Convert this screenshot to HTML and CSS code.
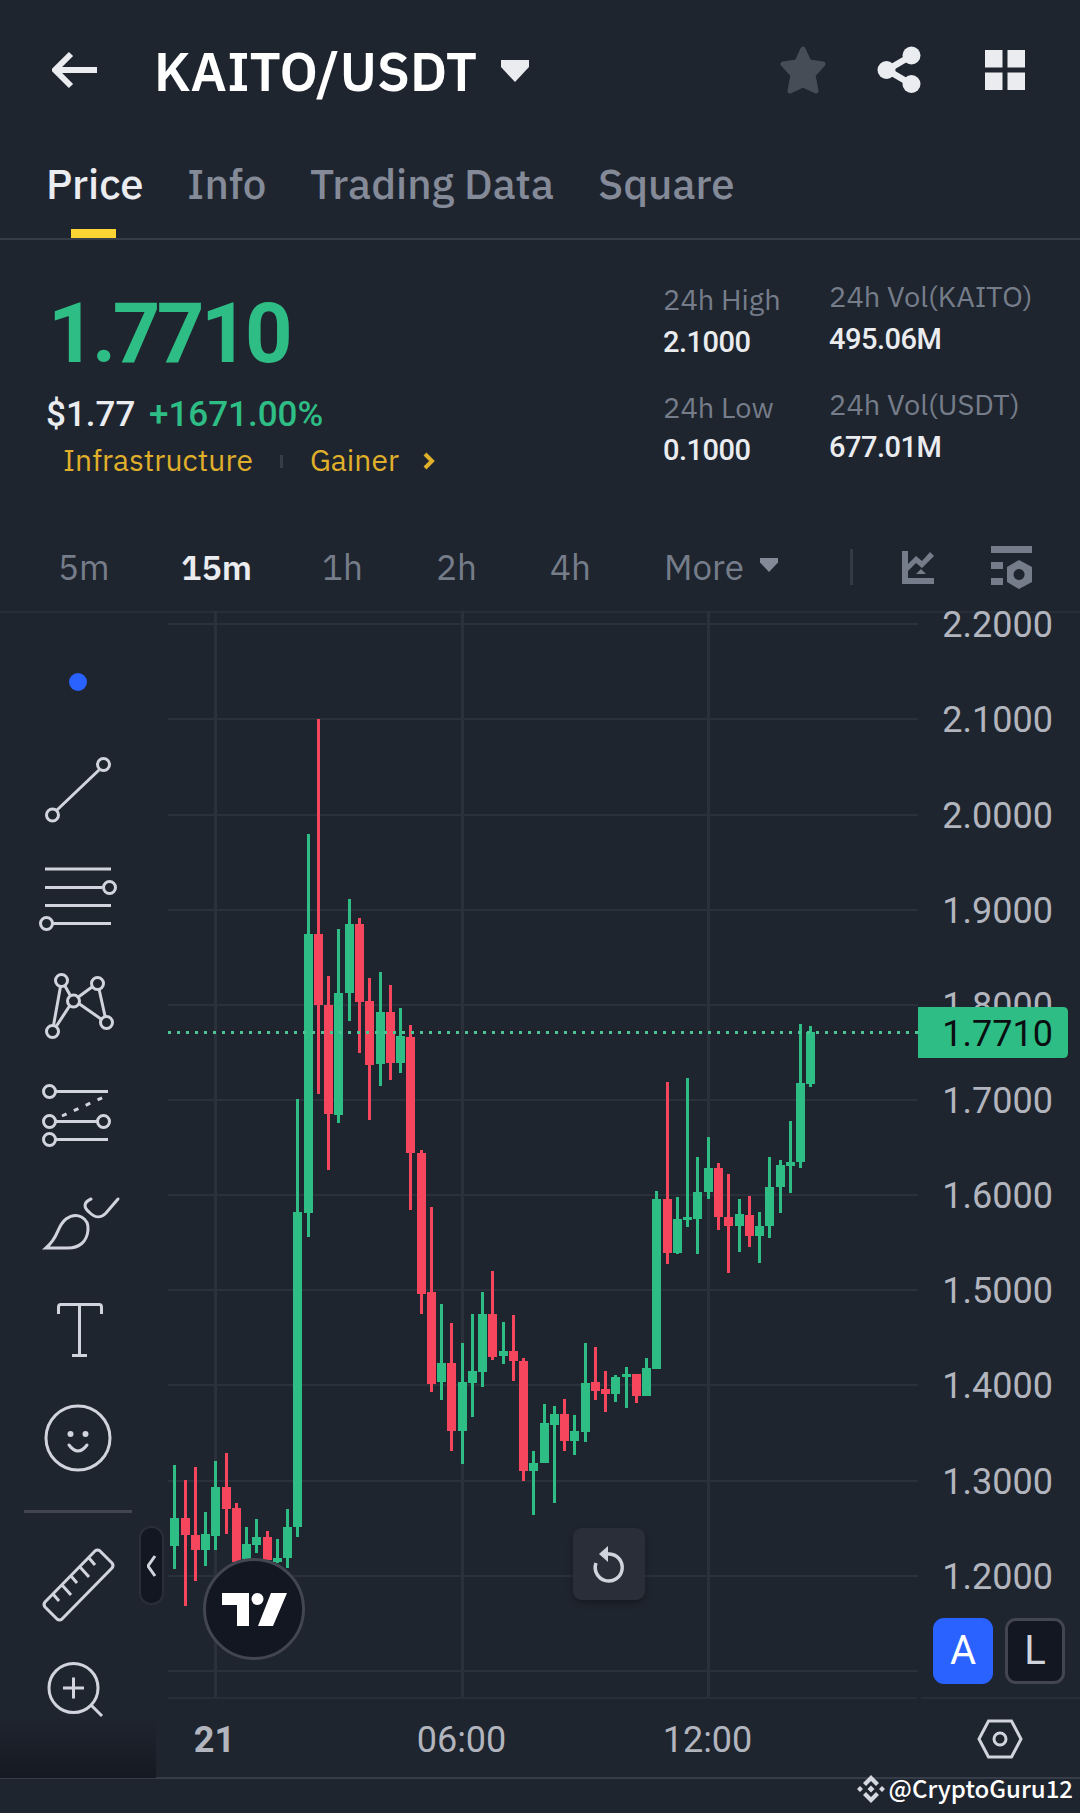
FILE: index.html
```html
<!DOCTYPE html>
<html lang="en">
<head>
    <meta charset="UTF-8">
    <meta name="viewport" content="width=device-width, initial-scale=1.0">
    <title>KAITO/USDT</title>
    <link rel="stylesheet" href="styles.css">
</head>
<body>

    <!-- Header -->
    <header class="header">
        <svg class="back" width="46" height="38" viewBox="0 0 46 38"><path d="M19 3L3 19l16 16M3 19h42" fill="none" stroke="#eaecef" stroke-width="6"/></svg>
        <h1>KAITO/USDT</h1>
        <svg class="caret" width="28" height="22" viewBox="0 0 28 22"><path d="M0 0h28v7L14 22 0 7z" fill="#eaecef"/></svg>
        <div class="actions">
            <svg width="46" height="48" viewBox="0 0 46 48"><path d="M23 3l6 13 14 2-10 11 3 16-13-6-13 6 3-16L3 18l14-2z" fill="#474d57" stroke="#474d57" stroke-width="5" stroke-linejoin="round"/></svg>
            <svg width="44" height="48" viewBox="0 0 44 48"><path d="M34 10L10 24l24 14" fill="none" stroke="#eaecef" stroke-width="6.5"/><g fill="#eaecef"><circle cx="34.500" cy="9.500" r="9"/><circle cx="9.500" cy="24" r="9"/><circle cx="34.500" cy="38" r="9"/></g></svg>
            <svg width="40" height="40" viewBox="0 0 40 40"><path d="M0 0h17.500v17.500H0zM22.500 0H40v17.500H22.500zM0 22.500h17.500V40H0zM22.500 22.500H40V40H22.500z" fill="#eaecef"/></svg>
        </div>
    </header>

    <!-- Tabs -->
    <nav class="tabs">
        <a class="active">Price</a>
        <a class="info">Info</a>
        <a class="trading">Trading Data</a>
        <a class="square">Square</a>
    </nav>

    <!-- Price summary -->
    <section class="summary">
        <div class="price-box">
            <div class="price">1.7710</div>
            <div class="change"><span class="usd">$1.77</span><span class="percent">+1671.00%</span></div>
            <div class="tags">
                <span class="infra">Infrastructure</span>
                <i></i>
                <span class="gainer">Gainer</span>
                <svg width="12" height="18" viewBox="0 0 12 18"><path d="M2 2l7 7-7 7" fill="none" stroke="#e0b02a" stroke-width="4"/></svg>
            </div>
        </div>
        <div class="stats">
            <dl><dt class="high">24h High</dt><dd>2.1000</dd></dl>
            <dl><dt class="low">24h Low</dt><dd>0.1000</dd></dl>
        </div>
        <div class="stats volume">
            <dl><dt>24h Vol(KAITO)</dt><dd>495.06M</dd></dl>
            <dl><dt>24h Vol(USDT)</dt><dd>677.01M</dd></dl>
        </div>
    </section>

    <!-- Intervals -->
    <nav class="intervals">
        <span>5m</span>
        <span class="active">15m</span>
        <span>1h</span>
        <span>2h</span>
        <span>4h</span>
        <span class="more">More <svg width="18" height="14" viewBox="0 0 18 14"><path d="M0 0h18v4.500L9 14 0 4.500z" fill="#848a97"/></svg></span>
        <i></i>
        <svg class="chart-icon" width="32" height="33" viewBox="0 0 32 33"><path d="M0 0h6v27h26v6H0zM6 13l8-8 6 5L28 1l4 4-12 12-6-5-8 8zM19 18l5 5H14z" fill="#767d8a"/></svg>
        <svg class="settings-icon" width="41" height="43" viewBox="0 0 41 43"><path d="M0 0h41v7H0zM0 16h12v7H0zM0 32h12v7H0z" fill="#767d8a"/><path d="M28 14l13 7v15l-13 7-12-7V21zM28 23a5.500 5.500 0 1 0 .1 0z" fill="#767d8a" fill-rule="evenodd"/></svg>
    </nav>

    <!-- Chart -->
    <main class="chart-area">
        <div class="toolbar">
            <svg viewBox="-78 -54 156 108"><circle r="9" fill="#2962ff" stroke="none"/></svg>
            <svg viewBox="-78 -54 156 108"><path d="M-21 20L21-20"/><circle cx="-25.500" cy="25" r="6"/><circle cx="25.500" cy="-25.500" r="6"/></svg>
            <svg viewBox="-78 -54 156 108"><path d="M-33-29h66M-33-10.500h57M-33 7.500h66M-25 25.500h58"/><circle cx="31.500" cy="-10.500" r="6"/><circle cx="-31.500" cy="25.500" r="6"/></svg>
            <svg viewBox="-78 -54 156 108"><path d="M-17.500-19.500l-7 39M-13-20l5 9M-1-8l15-11M21-17l6 27M1.500-2L23 13M-8.500 0l-13 20"/><circle cx="-16.500" cy="-25.500" r="6"/><circle cx="19.500" cy="-22.500" r="6"/><circle cx="-4.500" cy="-5" r="6"/><circle cx="-25.500" cy="25.500" r="6"/><circle cx="28.500" cy="16.500" r="6"/></svg>
            <svg viewBox="-78 -54 156 108"><path d="M-22-22.500h52M-22 7.500h42M-22 25.500h52"/><path d="M-16 2L26-17" stroke-dasharray="5 8"/><circle cx="-28.500" cy="-22.500" r="6"/><circle cx="-28.500" cy="7.500" r="6"/><circle cx="25.500" cy="7.500" r="6"/><circle cx="-28.500" cy="25.500" r="6"/></svg>
            <svg viewBox="-78 -54 156 108"><path d="M-32 26C-18 14-22 5-12-3C-1-11 11-4 10 8C9 20 1 26-10 26zM13-23c-7 3-8 8-2 13c6 6 11 7 17 1L40-23" stroke-linecap="round"/></svg>
            <svg viewBox="-78 -54 156 108"><path d="M-19.500-16v-7q0-2.500 2.500-2.500h38q2.500 0 2.500 2.500v7M1.500-25v50M-6 25.500H9"/></svg>
            <svg viewBox="-78 -54 156 108"><circle r="32"/><circle cx="-7.500" cy="-4" r="3" class="eye"/><circle cx="7.500" cy="-4" r="3" class="eye"/><path d="M-9 7q9 12 18 0" stroke-linecap="round"/></svg>
            <hr>
            <svg viewBox="-78 -54 156 108"><path d="M17-34q2.500-2 5 0l12 12q2 2.500 0 5L-16 34q-2.500 2-5 0l-12-12q-2-2.500 0-5zM-25 9l6 7M-16 0l9 10M-7-9l6 7M2-18l9 10M11-27l6 7" stroke-linejoin="round"/></svg>
            <svg viewBox="-78 -54 156 108"><circle cx="-4.500" cy="-5" r="24.500"/><path d="M-15-5H6M-4.500-15.500v21M13 12l11 11"/></svg>
            <div class="fade"></div>
        </div>
        <svg id="chart" width="924" height="1168" viewBox="156 611 924 1168"></svg>

        <div class="collapse"><svg width="10" height="22" viewBox="0 0 10 22"><path d="M8 1L1 11l7 10" fill="none" stroke="#d1d4dc" stroke-width="3"/></svg></div>
        <div class="tv-logo"><svg width="66" height="34" viewBox="0 0 66 34"><path d="M1 1h27v33H16V13H1zM50 1h16L52 34H37z" fill="#fff"/><circle cx="36.500" cy="7" r="6" fill="#fff"/></svg></div>
        <div class="reset"><svg width="36" height="40" viewBox="0 0 36 40"><path d="M5 19a13.500 13.500 0 1 0 13.500-9H10" fill="none" stroke="#d1d4dc" stroke-width="3.500"/><path d="M17 2v16L8 10z" fill="#d1d4dc"/></svg></div>
        <div class="scale-buttons"><button class="auto">A</button><button>L</button></div>
        <svg class="axis-settings" width="46" height="40" viewBox="0 0 46 40"><path d="M11.500 2h23L44 20l-9.500 18h-23L2 20z" fill="none" stroke="#d1d4dc" stroke-width="3"/><circle cx="23" cy="20" r="6" fill="none" stroke="#d1d4dc" stroke-width="3"/></svg>
    </main>

    <footer>
        <svg width="28" height="28" viewBox="0 0 28 28"><path d="M14 0l8 8-3 3-5-5-5 5-3-3zM14 28l8-8-3-3-5 5-5-5-3 3zM14 10.500l3.500 3.500-3.500 3.500-3.500-3.500zM3 11l3 3-3 3-3-3zM25 11l3 3-3 3-3-3z" fill="#d5d8de"/></svg>
        <span>@CryptoGuru12</span>
    </footer>

    <script src="chart.js"></script>
</body>
</html>
```
FILE: styles.css
```css
* {
    margin: 0;
    padding: 0;
    box-sizing: border-box;
}

body {
    width: 1080px;
    height: 1813px;
    overflow: hidden;
    font-family: "IBM Plex Sans", "Open Sans", sans-serif;
    background-color: #1f252f;
    color: #eaecef;
    white-space: nowrap;
}

svg {
    display: block;
    flex: none;
}

/* Header */
.header {
    display: flex;
    align-items: center;
    height: 140px;
    padding: 0 55px 0 52px;
}
.header h1 {
    width: 326px;
    margin-left: 56px;
    padding-top: 2px;
    font-size: 54px;
    font-weight: 600;
    line-height: 64px;
    color: #fff;
}
.caret {
    margin-left: 21px;
    margin-top: 2px;
}
.actions {
    display: flex;
    align-items: center;
    margin-left: auto;
}
.actions svg + svg {
    margin-left: 51px;
}
.actions svg:last-child {
    margin-left: 64px;
}

/* Tabs */
.tabs {
    display: flex;
    height: 100px;
    padding-left: 46px;
    border-bottom: 2px solid #373d48;
    font-size: 42px;
    font-weight: 500;
    line-height: 87px;
    color: #848a97;
}
.tabs a {
    position: relative;
    width: 97px;
    margin-right: 44px;
}
.tabs .info {
    width: 79px;
}
.tabs .trading {
    width: 244px;
}
.tabs .active {
    color: #eaecef;
}
.tabs .active::after {
    content: "";
    position: absolute;
    left: 25px;
    bottom: 0;
    width: 45px;
    height: 9px;
    background-color: #fcd535;
}

/* Price summary */
.summary {
    display: flex;
    height: 290px;
    padding-left: 46px;
}
.price-box {
    width: 617px;
    padding-top: 44px;
}
.price {
    padding-left: 2px;
    font-family: Roboto, sans-serif;
    font-size: 83px;
    font-weight: 700;
    line-height: 100px;
    letter-spacing: -3.5px;
    color: #2ebd85;
}
.change {
    display: flex;
    font-family: Roboto, sans-serif;
    font-size: 35px;
    font-weight: 500;
    line-height: 62px;
}
.usd {
    width: 103px;
}
.percent {
    color: #2ebd85;
}
.tags {
    display: flex;
    align-items: center;
    height: 30px;
    padding-left: 17px;
    font-size: 30px;
    line-height: 28px;
    color: #e0b02a;
}
.tags .infra {
    width: 190px;
    height: 30px;
    letter-spacing: 0.1px;
}
.tags i {
    width: 3px;
    height: 13px;
    margin: 0 27px;
    background-color: #373d48;
}
.tags .gainer {
    width: 113px;
    height: 30px;
}
.stats {
    width: 166px;
    padding-top: 37px;
}
.stats.volume {
    width: 250px;
    padding-top: 34px;
}
.stats dl {
    height: 108px;
}
.stats dt {
    font-size: 29px;
    line-height: 44px;
    color: #767d8a;
}
.stats dd {
    padding-top: 1px;
    font-family: Roboto, sans-serif;
    font-size: 29px;
    font-weight: 500;
    line-height: 40px;
    letter-spacing: -0.5px;
}

/* Intervals */
.intervals {
    display: flex;
    align-items: center;
    height: 81px;
    padding: 0 0 7px 58px;
    font-size: 35px;
    color: #767d8a;
}
.intervals span {
    width: 114px;
}
.intervals span:first-child {
    width: 123px;
}
.intervals span.active {
    width: 141px;
    font-size: 34px;
    font-weight: 600;
    color: #eaecef;
}
.intervals span.more {
    display: flex;
    align-items: center;
    justify-content: space-between;
}
.intervals i {
    width: 3px;
    height: 36px;
    margin-left: 72px;
    background-color: #333a45;
}
.intervals .more svg {
    margin-bottom: 4px;
}
.chart-icon {
    margin-left: 49px;
}
.settings-icon {
    margin-left: 57px;
}

/* Chart */
.chart-area {
    position: relative;
    display: flex;
    height: 1168px;
    border-bottom: 2px solid #373d48;
}
.toolbar {
    position: relative;
    width: 156px;
    height: 1167px;
    padding-top: 15px;
    border-top: 2px solid #272e38;
    overflow: hidden;
}
.toolbar svg {
    width: 156px;
    height: 108px;
    fill: none;
    stroke: #d1d4dc;
    stroke-width: 3;
}
.toolbar .eye {
    fill: #d1d4dc;
    stroke: none;
}
.toolbar hr {
    width: 108px;
    height: 3px;
    margin: 18px 24px;
    border: none;
    background-color: #434651;
}
.fade {
    position: absolute;
    left: 0;
    bottom: 0;
    width: 156px;
    height: 62px;
    background: linear-gradient(rgba(19, 23, 34, 0), #151922);
}
.collapse,
.tv-logo,
.reset {
    position: absolute;
    display: flex;
    align-items: center;
    justify-content: center;
}
.collapse {
    left: 139px;
    top: 915px;
    width: 25px;
    height: 79px;
    border: 2px solid #2a2e39;
    border-radius: 12px;
    background-color: #131722;
}
.tv-logo {
    left: 203px;
    top: 947px;
    width: 102px;
    height: 102px;
    border: 3px solid #434651;
    border-radius: 50%;
    background-color: #131722;
}
.reset {
    left: 573px;
    top: 917px;
    width: 72px;
    height: 72px;
    border-radius: 9px;
    background-color: #2a2e39;
    box-shadow: 0 3px 6px rgba(0, 0, 0, 0.3);
}
.scale-buttons {
    position: absolute;
    left: 933px;
    top: 1007px;
    display: flex;
    gap: 12px;
}
.scale-buttons button {
    width: 60px;
    height: 66px;
    border: 3px solid #434651;
    border-radius: 11px;
    font-family: Roboto, sans-serif;
    font-size: 40px;
    line-height: 58px;
    color: #d1d4dc;
    background-color: #131722;
}
.scale-buttons .auto {
    border-color: #2962ff;
    color: #fff;
    background-color: #2962ff;
}
.axis-settings {
    position: absolute;
    left: 977px;
    top: 1108px;
}

#chart text {
    font-family: Roboto, sans-serif;
    font-size: 36px;
    fill: #b2b5be;
}
#chart .grid {
    stroke: #2a313b;
    stroke-width: 2;
}
#chart .time {
    stroke-width: 3;
}
#chart .edge {
    stroke: #272e38;
}
#chart .up {
    fill: #2ebd85;
}
#chart .down {
    fill: #f6465d;
}
#chart .bold {
    font-weight: 700;
}
#chart .current {
    fill: #0b0e11;
}

/* Footer */
footer {
    display: flex;
    align-items: center;
    justify-content: flex-end;
    gap: 4px;
    height: 34px;
    margin-top: -7px;
    padding-right: 7px;
    font-family: "Noto Sans CJK SC", sans-serif;
    font-size: 24px;
    font-weight: 500;
    line-height: 32px;
    color: #fff;
}
footer svg,
footer span {
    position: relative;
}
footer span {
    height: 34px;
}
```
FILE: chart.js
```js
// direction, high, body top, body bottom, low
const candles = [
    ["up", 1465, 1518, 1546, 1569], ["down", 1480, 1518, 1535, 1606], ["down", 1467, 1535, 1550, 1581],
    ["up", 1512, 1534, 1550, 1566], ["up", 1461, 1487, 1536, 1550], ["down", 1453, 1487, 1509, 1534],
    ["down", 1503, 1508, 1562, 1562], ["up", 1527, 1544, 1559, 1562], ["up", 1519, 1537, 1545, 1553],
    ["down", 1531, 1537, 1560, 1562], ["up", 1539, 1558, 1562, 1563], ["up", 1509, 1527, 1558, 1568],
    ["up", 1099, 1212, 1527, 1537], ["up", 834, 934, 1213, 1237], ["down", 719, 934, 1005, 1094],
    ["down", 976, 1005, 1114, 1170], ["up", 929, 993, 1115, 1123], ["up", 899, 924, 993, 1021],
    ["down", 918, 924, 1002, 1053], ["down", 978, 1001, 1065, 1120], ["up", 972, 1012, 1064, 1086],
    ["down", 985, 1012, 1063, 1080], ["up", 1008, 1036, 1063, 1073], ["down", 1025, 1037, 1153, 1210],
    ["down", 1150, 1153, 1294, 1314], ["down", 1207, 1292, 1384, 1392], ["up", 1304, 1363, 1382, 1400],
    ["down", 1323, 1363, 1431, 1451], ["up", 1343, 1382, 1431, 1464], ["up", 1314, 1371, 1383, 1417],
    ["up", 1292, 1314, 1372, 1387], ["down", 1271, 1314, 1357, 1360], ["up", 1322, 1351, 1356, 1364],
    ["down", 1315, 1351, 1361, 1381], ["down", 1358, 1361, 1471, 1481], ["up", 1451, 1463, 1471, 1515],
    ["up", 1404, 1423, 1463, 1463], ["up", 1406, 1414, 1425, 1503], ["down", 1399, 1414, 1441, 1451],
    ["up", 1415, 1431, 1441, 1455], ["up", 1343, 1383, 1432, 1442], ["down", 1347, 1382, 1391, 1400],
    ["down", 1371, 1389, 1394, 1412], ["up", 1375, 1377, 1394, 1402], ["up", 1367, 1374, 1377, 1408],
    ["down", 1374, 1374, 1396, 1403], ["up", 1358, 1368, 1396, 1396], ["up", 1191, 1199, 1369, 1369],
    ["down", 1082, 1199, 1253, 1264], ["up", 1197, 1219, 1253, 1254], ["up", 1078, 1217, 1220, 1227],
    ["up", 1157, 1192, 1219, 1254], ["up", 1137, 1168, 1192, 1199], ["down", 1163, 1168, 1217, 1230],
    ["down", 1174, 1217, 1226, 1273], ["up", 1199, 1214, 1226, 1252], ["down", 1196, 1215, 1236, 1247],
    ["up", 1212, 1226, 1236, 1263], ["up", 1157, 1187, 1226, 1238], ["up", 1160, 1165, 1187, 1213],
    ["up", 1121, 1162, 1166, 1193], ["up", 1024, 1083, 1162, 1168], ["up", 1026, 1032, 1084, 1087]
];

let out = `<path class="grid edge" d="M156 612H1080M168 1698H917M921 1698H1080"/>`;

// time axis
[[215.5, "21"], [462.5, "06:00"], [708.5, "12:00"]].forEach(([x, label], i) => {
    out += `<path class="grid time" d="M${x} 611V1697"/>`;
    out += `<text class="${i ? "" : "bold"}" x="${x - 1}" y="1752" text-anchor="middle">${label}</text>`;
});

// price axis
for (let i = 0; i < 12; i++) {
    const y = 624.2 + i * 95.15;
    out += `<path class="grid" d="M168 ${Math.round(y)}H918"/>`;
    if (i < 11) {
        out += `<text x="1053" y="${y + 13}" text-anchor="end">${(2.2 - i / 10).toFixed(4)}</text>`;
    }
}

candles.forEach(([dir, high, top, bottom, low], i) => {
    const x = Math.floor(174.843 + i * 10.2579);
    out += `<rect class="${dir}" x="${x - 1}" y="${high}" width="3" height="${low - high}"/>`;
    out += `<rect class="${dir}" x="${x - 4}" y="${top}" width="9" height="${bottom - top}"/>`;
});

// current price
out += `<path d="M168 1032.500H918" stroke="#4cc595" stroke-width="3" stroke-dasharray="3 6"/>`;
out += `<path class="up" d="M918 1007h145q5 0 5 5v41q0 5-5 5H918z"/>`;
out += `<text class="current" x="1053" y="1046" text-anchor="end">1.7710</text>`;

document.getElementById("chart").innerHTML = out;
```
